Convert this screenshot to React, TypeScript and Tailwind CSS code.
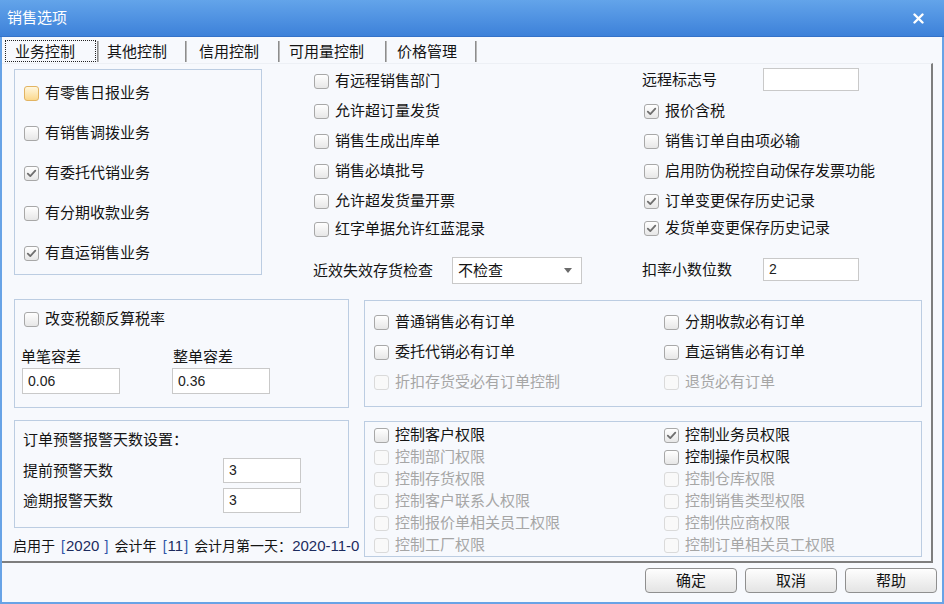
import React from "react";

const FONT = "font-['Liberation_Sans','Noto_Sans_CJK_SC',sans-serif]";

function Box({ checked = false, disabled = false, hot = false }: { checked?: boolean; disabled?: boolean; hot?: boolean }) {
  const cls = hot
    ? "border-[#e2b462] bg-linear-to-b from-[#fff7de] to-[#fbd88c]"
    : disabled
    ? "border-[#dadada] bg-[#f9f9f9]"
    : "border-[#a8a8a8] bg-linear-to-b from-white to-[#e7e7e7]";
  return (
    <span className={`w-[15px] h-[15px] rounded-[3px] border shrink-0 flex items-center justify-center ${cls}`}>
      {checked && (
        <svg width="11" height="11" viewBox="0 0 11 11">
          <path d="M1.8 5.6 L4.3 8.1 L9.3 2.6" stroke="#6f6f6f" strokeWidth="1.8" fill="none" strokeLinecap="round" strokeLinejoin="round" />
        </svg>
      )}
    </span>
  );
}

function Check({
  label,
  checked = false,
  disabled = false,
  hot = false,
  h = "h-[30px]",
}: {
  label: string;
  checked?: boolean;
  disabled?: boolean;
  hot?: boolean;
  h?: string;
}) {
  return (
    <div className={`flex items-center gap-[6px] ${h}`}>
      <Box checked={checked} disabled={disabled} hot={hot} />
      <span className={`text-[15px] leading-[20px] whitespace-nowrap ${disabled ? "text-[#a6a6a6]" : "text-[#141414]"}`}>{label}</span>
    </div>
  );
}

function Field({ value, w, h }: { value: string; w: string; h: string }) {
  return (
    <div className={`${w} ${h} border border-[#c9c9c9] bg-white flex items-center pl-[5px] text-[14px] text-[#222]`}>{value}</div>
  );
}

function Sep() {
  return (
    <div className="flex h-[21px] mb-[1px] shrink-0">
      <div className="w-[1px] bg-[#8d8d8d]" />
      <div className="w-[1px] bg-[#b9b9b9]" />
    </div>
  );
}

function BrL() {
  return <span className="inline-block w-[11px] text-right pr-[1px] text-[#2f55a8]">[</span>;
}
function BrR() {
  return <span className="inline-block w-[11px] text-left pl-[1px] text-[#2f55a8]">]</span>;
}

export default function App() {
  return (
    <div className={`${FONT} w-[944px] h-[604px] bg-[#f7f9fd] flex flex-col overflow-hidden text-[#141414]`}>
      {/* Title bar */}
      <div className="h-[37px] shrink-0 bg-linear-to-b from-[#63a4ea] to-[#3d81d9] flex items-center justify-between pl-[7px] pr-[20px] border-b border-[#3472c8]">
        <span className="text-white text-[15px] leading-[20px]">销售选项</span>
        <svg width="11" height="11" viewBox="0 0 11 11">
          <path d="M1.5 1.5 L9.5 9.5 M9.5 1.5 L1.5 9.5" stroke="white" strokeWidth="2.4" strokeLinecap="round" />
        </svg>
      </div>

      <div className="flex-1 flex flex-col border-x-2 border-b-2 border-[#68a3e6]">
        {/* Tabs */}
        <div className="h-[26px] shrink-0 flex items-end pl-[3px] text-[15px] leading-[20px]">
          <div className="w-[91px] h-[22px] border border-dotted border-[#222] flex items-center pl-[9px] pt-[1px] mb-[1px]">业务控制</div>
          <div className="w-[1px]" />
          <Sep />
          <div className="w-[86px] h-[22px] flex items-center pl-[8px] pt-[2px] mb-[1px]">其他控制</div>
          <Sep />
          <div className="w-[91px] h-[22px] flex items-center pl-[12px] pt-[2px] mb-[1px]">信用控制</div>
          <Sep />
          <div className="w-[105px] h-[22px] flex items-center pl-[9px] pt-[2px] mb-[1px]">可用量控制</div>
          <Sep />
          <div className="w-[88px] h-[22px] flex items-center pl-[10px] pt-[2px] mb-[1px]">价格管理</div>
          <Sep />
        </div>

        {/* Tab page */}
        <div className="w-[931px] h-[500px] shrink-0 border-r-2 border-b-2 border-[#7e7e7e] border-t border-t-[#edf0f5] flex flex-col">
          {/* Top section */}
          <div className="h-[235px] shrink-0 flex">
            {/* Group 1 */}
            <div className="ml-[12px] mt-[5px] w-[248px] h-[206px] border border-[#bccde2] flex flex-col pl-[9px] pt-[3px]">
              <Check label="有零售日报业务" hot h="h-[40px]" />
              <Check label="有销售调拨业务" h="h-[40px]" />
              <Check label="有委托代销业务" checked h="h-[40px]" />
              <Check label="有分期收款业务" h="h-[40px]" />
              <Check label="有直运销售业务" checked h="h-[40px]" />
            </div>

            {/* Middle column */}
            <div className="ml-[51px] w-[329px] flex flex-col pt-[2px] pl-[1px]">
              <Check label="有远程销售部门" />
              <Check label="允许超订量发货" />
              <Check label="销售生成出库单" />
              <Check label="销售必填批号" />
              <Check label="允许超发货量开票" />
              <Check label="红字单据允许红蓝混录" h="h-[26px]" />
              <div className="mt-[15px] flex items-center">
                <span className="w-[139px] -ml-[1px] text-[15px] leading-[20px]">近效失效存货检查</span>
                <div className="w-[130px] h-[27px] border border-[#c9c9c9] bg-white flex items-center justify-between pl-[5px] pr-[9px]">
                  <span className="text-[15px] leading-[20px]">不检查</span>
                  <svg width="8" height="5" viewBox="0 0 8 5">
                    <path d="M0 0 L8 0 L4 5 Z" fill="#6b6b6b" />
                  </svg>
                </div>
              </div>
            </div>

            {/* Right column */}
            <div className="flex flex-col pt-[4px]">
              <div className="flex items-center h-[23px]">
                <span className="w-[121px] text-[15px] leading-[20px]">远程标志号</span>
                <Field value="" w="w-[96px]" h="h-[23px]" />
              </div>
              <div className="mt-[5px] pl-[2px] flex flex-col">
                <Check label="报价含税" checked />
                <Check label="销售订单自由项必输" />
                <Check label="启用防伪税控自动保存发票功能" />
                <Check label="订单变更保存历史记录" checked />
                <Check label="发货单变更保存历史记录" checked h="h-[24px]" />
              </div>
              <div className="mt-[18px] flex items-center h-[23px]">
                <span className="w-[121px] text-[15px] leading-[20px]">扣率小数位数</span>
                <Field value="2" w="w-[96px]" h="h-[23px]" />
              </div>
            </div>
          </div>

          {/* Bottom section */}
          <div className="flex">
            {/* Left column */}
            <div className="ml-[12px] w-[335px] flex flex-col">
              {/* Group 2 */}
              <div className="h-[109px] border border-[#bccde2] flex flex-col pt-[7px]">
                <div className="pl-[9px]">
                  <Check label="改变税额反算税率" h="h-[24px]" />
                </div>
                <div className="flex mt-[16px] pl-[6px]">
                  <div className="w-[151px] flex flex-col">
                    <span className="h-[20px] text-[15px] leading-[20px]">单笔容差</span>
                    <div className="mt-[1px] ml-[1px]">
                      <Field value="0.06" w="w-[98px]" h="h-[26px]" />
                    </div>
                  </div>
                  <div className="flex flex-col">
                    <span className="h-[20px] text-[15px] leading-[20px] ml-[1px]">整单容差</span>
                    <div className="mt-[1px]">
                      <Field value="0.36" w="w-[98px]" h="h-[26px]" />
                    </div>
                  </div>
                </div>
              </div>

              {/* Group 3 */}
              <div className="mt-[12px] h-[108px] border border-[#bccde2] flex flex-col pt-[9px] pl-[8px]">
                <span className="h-[20px] text-[15px] leading-[20px]">订单预警报警天数设置：</span>
                <div className="mt-[8px] flex items-center">
                  <span className="w-[200px] text-[15px] leading-[20px]">提前预警天数</span>
                  <Field value="3" w="w-[78px]" h="h-[25px]" />
                </div>
                <div className="mt-[5px] flex items-center">
                  <span className="w-[200px] text-[15px] leading-[20px]">逾期报警天数</span>
                  <Field value="3" w="w-[78px]" h="h-[25px]" />
                </div>
              </div>

              {/* Footer text */}
              <div className="mt-[8px] -ml-[1px] h-[20px] whitespace-nowrap text-[14px] leading-[20px]">
                启用于<BrL />
                <span className="text-[#1c2b5e] text-[15px]">2020 </span>
                <BrR />会计年<BrL />
                <span className="text-[#1c2b5e] text-[15px]">11</span>
                <BrR />会计月第一天：
                <span className="text-[#1c2b5e] text-[15px]">2020-11-0</span>
              </div>
            </div>

            {/* Right column */}
            <div className="ml-[15px] w-[558px] flex flex-col">
              {/* Group 4 */}
              <div className="mt-[1px] h-[107px] border border-[#bccde2] flex pt-[6px] pl-[9px]">
                <div className="w-[290px] flex flex-col">
                  <Check label="普通销售必有订单" />
                  <Check label="委托代销必有订单" />
                  <Check label="折扣存货受必有订单控制" disabled />
                </div>
                <div className="flex flex-col">
                  <Check label="分期收款必有订单" />
                  <Check label="直运销售必有订单" />
                  <Check label="退货必有订单" disabled />
                </div>
              </div>

              {/* Group 5 */}
              <div className="mt-[14px] h-[136px] border border-[#bccde2] flex pl-[9px] pt-[2px]">
                <div className="w-[290px] flex flex-col">
                  <Check label="控制客户权限" h="h-[22px]" />
                  <Check label="控制部门权限" disabled h="h-[22px]" />
                  <Check label="控制存货权限" disabled h="h-[22px]" />
                  <Check label="控制客户联系人权限" disabled h="h-[22px]" />
                  <Check label="控制报价单相关员工权限" disabled h="h-[22px]" />
                  <Check label="控制工厂权限" disabled h="h-[22px]" />
                </div>
                <div className="flex flex-col">
                  <Check label="控制业务员权限" checked h="h-[22px]" />
                  <Check label="控制操作员权限" h="h-[22px]" />
                  <Check label="控制仓库权限" disabled h="h-[22px]" />
                  <Check label="控制销售类型权限" disabled h="h-[22px]" />
                  <Check label="控制供应商权限" disabled h="h-[22px]" />
                  <Check label="控制订单相关员工权限" disabled h="h-[22px]" />
                </div>
              </div>
            </div>
          </div>
        </div>

        {/* Buttons */}
        <div className="flex justify-end gap-[8px] pt-[5px] pr-[5px]">
          {["确定", "取消", "帮助"].map((t) => (
            <div
              key={t}
              className="w-[92px] h-[25px] rounded-[4px] border border-[#8f8f8f] bg-linear-to-b from-[#fefefe] to-[#e4e4e4] flex items-center justify-center text-[15px] leading-[20px]"
            >
              {t}
            </div>
          ))}
        </div>
      </div>
    </div>
  );
}
